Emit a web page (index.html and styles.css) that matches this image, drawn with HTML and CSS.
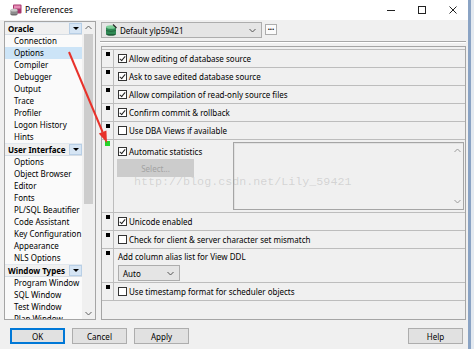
FILE: index.html
```html
<!DOCTYPE html>
<html>
<head>
<meta charset="utf-8">
<title>Preferences</title>
<link rel="stylesheet" href="styles.css">
</head>
<body>
<div class="window">
  <div class="titlebar">
    <svg class="app-icon" width="12" height="12" viewBox="0 0 12 12">
      <rect x="3" y="0.5" width="8.5" height="9" rx="1" fill="#a8356c"/>
      <rect x="4" y="1.5" width="6.5" height="3" fill="#e58db6"/>
      <ellipse cx="4" cy="10" rx="3.6" ry="1.6" fill="#6f6f6f"/>
      <rect x="0.4" y="6" width="7.2" height="4" fill="#8d8d8d"/>
      <ellipse cx="4" cy="6" rx="3.6" ry="1.6" fill="#c9c9c9"/>
    </svg>
    <span class="title">Preferences</span>
    <div class="controls">
      <span class="ctl"><svg width="8" height="8" viewBox="0 0 8 8"><line x1="0" y1="4.5" x2="8" y2="4.5" stroke="#222" stroke-width="1"/></svg></span>
      <span class="ctl"><svg width="8" height="8" viewBox="0 0 8 8"><rect x="0.5" y="0.5" width="7" height="7" fill="none" stroke="#222" stroke-width="1"/></svg></span>
      <span class="ctl"><svg width="8" height="8" viewBox="0 0 8 8"><path d="M0.5 0.5 L7.5 7.5 M7.5 0.5 L0.5 7.5" stroke="#222" stroke-width="1"/></svg></span>
    </div>
  </div>

  <div class="client">
    <div class="main">
      <div class="sidebar">
        <div class="list">
          <div class="group"><span>Oracle</span><span class="dd"><i></i></span></div>
          <div class="item">Connection</div>
          <div class="item sel">Options</div>
          <div class="item">Compiler</div>
          <div class="item">Debugger</div>
          <div class="item">Output</div>
          <div class="item">Trace</div>
          <div class="item">Profiler</div>
          <div class="item">Logon History</div>
          <div class="item">Hints</div>
          <div class="group"><span>User Interface</span><span class="dd"><i></i></span></div>
          <div class="item">Options</div>
          <div class="item">Object Browser</div>
          <div class="item">Editor</div>
          <div class="item">Fonts</div>
          <div class="item">PL/SQL Beautifier</div>
          <div class="item">Code Assistant</div>
          <div class="item">Key Configuration</div>
          <div class="item">Appearance</div>
          <div class="item">NLS Options</div>
          <div class="group"><span>Window Types</span><span class="dd"><i></i></span></div>
          <div class="item">Program Window</div>
          <div class="item">SQL Window</div>
          <div class="item">Test Window</div>
          <div class="item">Plan Window</div>
        </div>
        <div class="vscroll">
          <span class="arrow"><svg width="7" height="5" viewBox="0 0 7 5"><path d="M0.5 4 L3.5 1 L6.5 4" fill="none" stroke="#606060" stroke-width="1"/></svg></span>
          <div class="track"><div class="thumb"></div></div>
          <span class="arrow"><svg width="7" height="5" viewBox="0 0 7 5"><path d="M0.5 1 L3.5 4 L6.5 1" fill="none" stroke="#606060" stroke-width="1"/></svg></span>
        </div>
      </div>

      <div class="content">
        <div class="topbar">
          <div class="combo profile">
            <svg class="db-icon" width="12" height="12" viewBox="0 0 12 12">
              <ellipse cx="6" cy="10" rx="5" ry="1.8" fill="#1f5f3a"/>
              <rect x="1" y="3" width="10" height="7" fill="#2f8a55"/>
              <ellipse cx="6" cy="3" rx="5" ry="1.8" fill="#7fd09a"/>
              <path d="M1 6.5 Q6 8.5 11 6.5" fill="none" stroke="#1f5f3a" stroke-width="0.8"/>
              <path d="M8 0.5 L11.5 4" stroke="#2a2a2a" stroke-width="1.2"/>
            </svg>
            <span class="combo-text">Default ylp59421</span>
            <svg class="chev" width="7" height="5" viewBox="0 0 7 5"><path d="M0.5 1 L3.5 4 L6.5 1" fill="none" stroke="#555" stroke-width="1"/></svg>
          </div>
          <div class="dots">···</div>
        </div>
        <div class="divider"></div>

        <div class="panel">
          <div class="row">
            <div class="mk"><i></i></div>
            <div class="body"><span class="cb on"></span><span class="lbl">Allow editing of database source</span></div>
          </div>
          <div class="row">
            <div class="mk"><i></i></div>
            <div class="body"><span class="cb on"></span><span class="lbl">Ask to save edited database source</span></div>
          </div>
          <div class="row">
            <div class="mk"><i></i></div>
            <div class="body"><span class="cb on"></span><span class="lbl">Allow compilation of read-only source files</span></div>
          </div>
          <div class="row">
            <div class="mk"><i></i></div>
            <div class="body"><span class="cb on"></span><span class="lbl">Confirm commit &amp; rollback</span></div>
          </div>
          <div class="row">
            <div class="mk"><i></i></div>
            <div class="body"><span class="cb"></span><span class="lbl">Use DBA Views if available</span></div>
          </div>
          <div class="row tall">
            <div class="mk"><i class="green"></i></div>
            <div class="body stats">
              <div class="stats-left">
                <div class="line"><span class="cb on"></span><span class="lbl">Automatic statistics</span></div>
                <div class="btn-disabled">Select...</div>
              </div>
              <div class="memo">
                <div class="memo-scroll">
                  <svg width="7" height="5" viewBox="0 0 7 5"><path d="M0.5 4 L3.5 1 L6.5 4" fill="none" stroke="#9a9a9a" stroke-width="1"/></svg>
                  <svg width="7" height="5" viewBox="0 0 7 5"><path d="M0.5 1 L3.5 4 L6.5 1" fill="none" stroke="#9a9a9a" stroke-width="1"/></svg>
                </div>
              </div>
            </div>
          </div>
          <div class="row">
            <div class="mk"><i></i></div>
            <div class="body"><span class="cb on"></span><span class="lbl">Unicode enabled</span></div>
          </div>
          <div class="row">
            <div class="mk"><i></i></div>
            <div class="body"><span class="cb"></span><span class="lbl">Check for client &amp; server character set mismatch</span></div>
          </div>
          <div class="row mid">
            <div class="mk"><i></i></div>
            <div class="body col">
              <span class="lbl plain">Add column alias list for View DDL</span>
              <div class="combo small"><span class="combo-text">Auto</span><svg class="chev" width="7" height="5" viewBox="0 0 7 5"><path d="M0.5 1 L3.5 4 L6.5 1" fill="none" stroke="#555" stroke-width="1"/></svg></div>
            </div>
          </div>
          <div class="row last">
            <div class="mk"><i></i></div>
            <div class="body"><span class="cb"></span><span class="lbl">Use timestamp format for scheduler objects</span></div>
          </div>
        </div>
      </div>
    </div>

    <div class="buttons">
      <button class="btn default">OK</button>
      <button class="btn">Cancel</button>
      <button class="btn">Apply</button>
      <span class="spacer"></span>
      <button class="btn">Help</button>
    </div>
  </div>

  <div class="watermark">http://blog.csdn.net/Lily_59421</div>
  <svg class="annot" width="474" height="349" viewBox="0 0 474 349">
    <line x1="69" y1="52" x2="102.6" y2="132" stroke="#e8322b" stroke-width="2"/>
    <polygon points="107,143 106.4,130.6 98.8,133.6" fill="#e8322b"/>
  </svg>
</div>
</body>
</html>
```

FILE: styles.css
```css
* { box-sizing: border-box; }
html, body { margin: 0; padding: 0; }
body {
  width: 474px;
  height: 349px;
  overflow: hidden;
  background: #e4eaf1;
  font-family: "Noto Sans", "Liberation Sans", sans-serif;
  font-size: 8px;
  color: #000;
}
.window {
  position: relative;
  width: 471px;
  height: 349px;
  background: #f0f0f0;
  border-right: 3px solid #8aa3c4;
  display: flex;
  flex-direction: column;
}
.titlebar {
  height: 20px;
  background: #fff;
  display: flex;
  align-items: center;
  flex: none;
}
.app-icon { margin-left: 10px; flex: none; }
.title { margin-left: 3px; font-size: 8.6px; }
.controls { margin-left: auto; display: flex; height: 20px; }
.ctl { width: 31px; display: flex; align-items: center; justify-content: center; }

.client { flex: 1; display: flex; flex-direction: column; padding-top: 1px; }
.main { display: flex; height: 299px; }

/* sidebar */
.sidebar {
  margin-left: 4px;
  width: 92px;
  height: 299px;
  border: 1px solid #a5a5a5;
  display: flex;
  background: #fafafa;
}
.list { width: 77px; overflow: hidden; }
.group {
  height: 13px;
  display: flex;
  align-items: center;
  justify-content: space-between;
  padding-left: 3px;
  font-weight: bold;
  background: #f0f0f0;
  border-top: 1px solid #e2e8ee;
  border-bottom: 1px solid #d6dde4;
}
.dd {
  width: 13px;
  height: 11px;
  background: #d6e5f4;
  border: 1px solid #b8cfe6;
  display: flex;
  align-items: center;
  justify-content: center;
}
.dd i {
  display: block;
  width: 0; height: 0;
  border-left: 3px solid transparent;
  border-right: 3px solid transparent;
  border-top: 3px solid #000;
}
.item { height: 12px; line-height: 12px; padding-left: 9px; white-space: nowrap; }
.item.sel { background: #cce4f7; }

.vscroll {
  width: 13px;
  background: #f0f0f0;
  display: flex;
  flex-direction: column;
  align-items: center;
}
.arrow { height: 11px; display: flex; align-items: center; justify-content: center; flex: none; }
.track { flex: 1; width: 9px; }
.thumb { margin-top: 1px; height: 170px; background: #cdcdcd; }

/* content */
.content { margin-left: 5px; width: 365px; display: flex; flex-direction: column; }
.topbar { margin-top: 1px; height: 16px; display: flex; gap: 3px; flex: none; }
.combo {
  border: 1px solid #adadad;
  background: #e5e5e5;
  display: flex;
  align-items: center;
}
.combo.profile { width: 161px; height: 16px; padding-left: 3px; }
.db-icon { flex: none; }
.combo-text { margin-left: 3px; white-space: nowrap; }
.chev { margin-left: auto; margin-right: 5px; flex: none; }
.dots {
  margin-top: 2px;
  width: 12px;
  height: 11px;
  border: 1px solid #adadad;
  background: #fbfbfb;
  font-size: 8px;
  line-height: 7px;
  text-align: center;
  font-weight: bold;
}
.divider {
  margin-top: 3px;
  margin-left: -1px;
  height: 2px;
  border-top: 1px solid #a7a7a7;
  border-bottom: 1px solid #fff;
  flex: none;
}
.panel {
  margin-top: 3px;
  flex: 1;
  border: 1px solid #a5a5a5;
  padding-top: 2px;
  display: flex;
  flex-direction: column;
}
.row {
  display: flex;
  height: 18px;
  border-top: 1px solid #bdbdbd;
  flex: none;
}
.row.tall { height: 73px; }
.row.mid { height: 34px; }
.row.last { border-bottom: 1px solid #bdbdbd; height: 19px; }
.mk { width: 11px; position: relative; flex: none; }
.mk i {
  position: absolute;
  left: 4px;
  top: 2px;
  width: 4px;
  height: 4px;
  background: #000;
}
.mk i.green { left: 3px; top: 1px; width: 5px; height: 5px; background: #25d42a; }
.body {
  flex: 1;
  border-left: 1px solid #bdbdbd;
  display: flex;
  align-items: center;
  padding-left: 4px;
}
.cb {
  width: 9px;
  height: 9px;
  border: 1px solid #333;
  background: #fff;
  flex: none;
  position: relative;
}
.cb.on::after {
  content: "";
  position: absolute;
  left: 2px;
  top: 0px;
  width: 2px;
  height: 5px;
  border-right: 1px solid #222;
  border-bottom: 1px solid #222;
  transform: rotate(40deg);
}
.lbl { margin-left: 2px; white-space: nowrap; }
.lbl.plain { margin-left: 0; }

.body.stats { align-items: flex-start; }
.stats-left { display: flex; flex-direction: column; }
.line { display: flex; align-items: center; margin-top: 5px; height: 12px; }
.btn-disabled {
  margin-top: 2px;
  width: 77px;
  height: 18px;
  background: #cccccc;
  color: #a3a3a3;
  display: flex;
  align-items: center;
  justify-content: center;
  margin-left: -1px;
}
.memo {
  margin-left: auto;
  margin-right: 1px;
  margin-top: 2px;
  width: 231px;
  height: 68px;
  border: 1px solid #a5a5a5;
  box-shadow: inset 1px 1px 0 #e2e2e2;
  display: flex;
  justify-content: flex-end;
}
.memo-scroll {
  width: 12px;
  display: flex;
  flex-direction: column;
  justify-content: space-between;
  align-items: center;
  padding: 5px 0 5px;
}

.body.col { flex-direction: column; align-items: flex-start; justify-content: flex-start; padding-top: 2px; }
.body.col .lbl { height: 12px; line-height: 12px; }
.combo.small { margin-top: 2px; width: 62px; height: 16px; padding-left: 2px; }
.combo.small .combo-text { margin-left: 2px; }

/* buttons */
.buttons {
  margin-top: 8px;
  padding-left: 10px;
  display: flex;
  gap: 7px;
  padding-right: 5px;
}
.btn {
  width: 55px;
  height: 16px;
  border: 1px solid #adadad;
  background: #e1e1e1;
  font-family: "Noto Sans", "Liberation Sans", sans-serif;
  font-size: 8px;
  padding: 0;
  color: #000;
}
.btn.default { border-color: #0078d7; box-shadow: inset 0 0 0 1px #0078d7; }
.spacer { flex: 1; }

/* overlays */
.watermark {
  position: absolute;
  left: 134px;
  top: 175px;
  font-family: "Liberation Mono", monospace;
  font-size: 11.7px;
  color: rgba(150, 150, 150, 0.32);
  white-space: nowrap;
  pointer-events: none;
}
.annot { position: absolute; left: 0; top: 0; pointer-events: none; }
```
